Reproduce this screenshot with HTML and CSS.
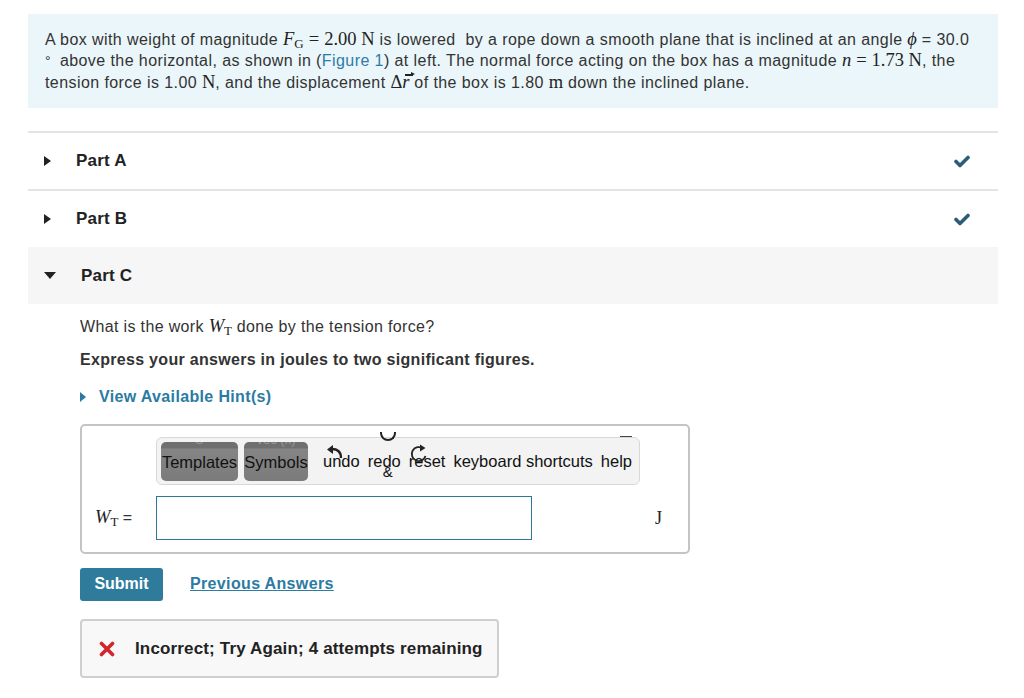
FILE: index.html
```html
<!DOCTYPE html>
<html lang="en">
<head>
    <meta charset="UTF-8">
    <title>Work done by the tension force</title>
    <link rel="stylesheet" href="styles.css">
</head>
<body>
    <div class="page">
        <!-- Problem statement -->
        <div class="intro">
            A box with weight of magnitude <span class="m"><i>F</i><sub>G</sub><span class="eq">=</span>2.00 N</span> is lowered&nbsp; by a rope down a smooth plane that is inclined at an angle <span class="m"><i>ϕ</i></span> = 30.0<br>
            <span class="deg">°</span> above the horizontal, as shown in (<a class="figlink">Figure 1</a>) at left. The normal force acting on the box has a magnitude <span class="m"><i>n</i><span class="eq">=</span>1.73 N</span>, the<br>
            tension force is 1.00 <span class="m">N</span>, and the displacement <span class="m">Δ<i class="vec">r</i></span> of the box is 1.80 <span class="m">m</span> down the inclined plane.
        </div>

        <!-- Parts -->
        <div class="parts">
            <div class="part">
                <span class="tri-right"></span>
                <span class="part-title">Part A</span>
                <svg class="check" width="16" height="13" viewBox="0 0 16 13"><path d="M2 6.5 L6 10.5 L14 2.5" fill="none" stroke="#2c5d78" stroke-width="3.6" stroke-linecap="round" stroke-linejoin="round"/></svg>
            </div>
            <div class="part">
                <span class="tri-right"></span>
                <span class="part-title">Part B</span>
                <svg class="check" width="16" height="13" viewBox="0 0 16 13"><path d="M2 6.5 L6 10.5 L14 2.5" fill="none" stroke="#2c5d78" stroke-width="3.6" stroke-linecap="round" stroke-linejoin="round"/></svg>
            </div>
            <div class="part part-open">
                <span class="tri-down"></span>
                <span class="part-title">Part C</span>
            </div>

            <div class="part-body">
                <p class="question">What is the work <span class="m"><i>W</i><sub>T</sub></span> done by the tension force?</p>
                <p class="instr">Express your answers in joules to two significant figures.</p>
                <p class="hint"><span class="tri-hint"></span>View Available Hint(s)</p>

                <div class="answer-box">
                    <div class="toolbar">
                        <span class="tb-btn tb-templates"><span class="ghost">U</span>Templates</span>
                        <span class="tb-btn tb-symbols"><span class="ghost">vec (x)</span>Symbols</span>
                        <span class="tb-word">
                            <svg class="ico ico-undo" width="18" height="14" viewBox="0 0 18 14"><path d="M15 13 C15 6 11 4 6 4" fill="none" stroke="#222" stroke-width="2.4"/><path d="M7 0 L1 4.5 L7 9 Z" fill="#222"/></svg>
                            undo
                        </span>
                        <span class="tb-word">
                            <span class="ico ico-arc"></span>
                            <span class="ico ico-amp">&amp;</span>
                            redo
                        </span>
                        <span class="tb-word">
                            <svg class="ico ico-reset" width="20" height="20" viewBox="0 0 20 20"><path d="M14 4.5 A7 7 0 1 0 16.5 12" fill="none" stroke="#222" stroke-width="1.8"/><path d="M11 0.5 L16.5 4 L11 7.5 Z" fill="#222"/></svg>
                            reset
                        </span>
                        <span class="tb-word">keyboard shortcuts</span>
                        <span class="tb-word">
                            <span class="ico ico-bar"></span>
                            help
                        </span>
                    </div>

                    <div class="answer-row">
                        <span class="label"><span class="m"><i>W</i><sub>T</sub></span> =</span>
                        <span class="input"></span>
                        <span class="unit">J</span>
                    </div>
                </div>

                <div class="actions">
                    <span class="submit">Submit</span>
                    <a class="prev">Previous Answers</a>
                </div>

                <div class="feedback">
                    <svg class="cross" width="16" height="16" viewBox="0 0 16 16"><path d="M2.5 2.5 L13.5 13.5 M13.5 2.5 L2.5 13.5" stroke="#d1262b" stroke-width="3.6" stroke-linecap="round"/></svg>
                    <span>Incorrect; Try Again; 4 attempts remaining</span>
                </div>
            </div>
        </div>
    </div>
</body>
</html>
```

FILE: styles.css
```css
body {
    margin: 0;
    font-family: "Liberation Sans", Arial, sans-serif;
    color: #333;
    background: #fff;
}

.page {
    width: 970px;
    padding: 14px 0 0 28px;
}

/* Problem statement */
.intro {
    background: #eaf6f9;
    padding: 15px 17px 16px;
    font-size: 16px;
    letter-spacing: 0.42px;
    line-height: 21px;
    height: 63px;
    white-space: nowrap;
}

.m {
    font-family: "Liberation Serif", "DejaVu Serif", serif;
    font-size: 18.5px;
    letter-spacing: 0;
    line-height: 0;
    color: #222;
}

.m sub {
    font-size: 13px;
    font-style: normal;
    line-height: 0;
    vertical-align: -3px;
}

.eq {
    margin: 0 5px;
}

/* vector arrow over r */
.vec {
    display: inline-block;
    position: relative;
    line-height: 18px;
}

.vec::before {
    content: "";
    position: absolute;
    top: 1px;
    left: 3px;
    width: 8px;
    height: 1.5px;
    background: #222;
}

.vec::after {
    content: "";
    position: absolute;
    top: -1px;
    left: 9px;
    border-top: 2.5px solid transparent;
    border-bottom: 2.5px solid transparent;
    border-left: 4px solid #222;
}

.deg {
    font-size: 14px;
    margin-right: 4px;
}

.figlink {
    color: #2d7ca6;
}

/* Part rows */
.parts {
    margin-top: 23px;
}

.part {
    display: flex;
    align-items: center;
    height: 56px;
    border-top: 2px solid #e4e4e4;
    padding-left: 16px;
    padding-right: 28px;
}

.part-open {
    background: #f6f6f6;
    border-top: none;
    height: 57px;
}

.part-title {
    font-size: 17px;
    letter-spacing: 0.2px;
    font-weight: bold;
    color: #222;
}

.tri-right {
    width: 0;
    height: 0;
    border-top: 5px solid transparent;
    border-bottom: 5px solid transparent;
    border-left: 7px solid #222;
    margin-right: 25px;
}

.tri-down {
    width: 0;
    height: 0;
    border-left: 6px solid transparent;
    border-right: 6px solid transparent;
    border-top: 7px solid #222;
    margin-right: 25px;
}

.check {
    margin-left: auto;
}

/* Part C content */
.part-body {
    padding-left: 52px;
}

.question {
    margin: 12px 0 0;
    font-size: 16px;
    letter-spacing: 0.35px;
    line-height: 21px;
}

.instr {
    margin: 12px 0 0;
    font-size: 16px;
    letter-spacing: 0.3px;
    line-height: 21px;
    font-weight: bold;
}

.hint {
    margin: 16px 0 0;
    font-size: 16px;
    letter-spacing: 0.35px;
    line-height: 21px;
    font-weight: bold;
    color: #2b7ba2;
    display: flex;
    align-items: center;
}

.tri-hint {
    width: 0;
    height: 0;
    border-top: 5px solid transparent;
    border-bottom: 5px solid transparent;
    border-left: 6px solid #2b7ba2;
    margin-right: 13px;
}

/* Answer box */
.answer-box {
    margin-top: 17px;
    width: 606px;
    border: 2px solid #c4c4c4;
    border-radius: 5px;
    padding: 11px 0 12px;
}

.toolbar {
    margin-left: 74px;
    width: 478px;
    height: 46px;
    background: #f3f3f3;
    border: 1px solid #d8d8d8;
    border-radius: 6px;
    display: flex;
    align-items: center;
    padding-left: 4px;
    font-size: 16.5px;
    color: #111;
    white-space: nowrap;
}

.toolbar > span {
    flex-shrink: 0;
}

.tb-btn {
    position: relative;
    overflow: hidden;
    height: 39px;
    line-height: 40px;
    border-radius: 5px;
    background: linear-gradient(#6f6f6f 0, #6f6f6f 6px, #858585 7px, #7b7b7b 100%);
    color: #111;
    text-align: center;
    margin-right: 6px;
}

.tb-templates {
    width: 77px;
}

.tb-symbols {
    width: 64px;
    margin-right: 15px;
}

.ghost {
    position: absolute;
    top: -12px;
    left: 0;
    right: 0;
    font-size: 13px;
    line-height: 20px;
    color: #9a9a9a;
}

.tb-word {
    position: relative;
    margin-right: 8px;
}

.ico {
    position: absolute;
}

.ico-undo {
    left: 3px;
    top: -7px;
}

.ico-arc {
    left: 12px;
    top: -20px;
    width: 12px;
    height: 7px;
    border: 2px solid #222;
    border-top: none;
    border-radius: 0 0 8px 8px;
}

.ico-amp {
    left: 15px;
    top: 11px;
    font-size: 15px;
}

.ico-reset {
    left: 0;
    top: -8px;
}

.ico-bar {
    right: 0;
    top: -16px;
    width: 12px;
    height: 1px;
    background: #444;
}

.answer-row {
    display: flex;
    align-items: center;
    margin-top: 11px;
}

.label {
    width: 61px;
    padding-left: 13px;
    font-size: 16px;
}

.input {
    width: 374px;
    height: 42px;
    border: 1.5px solid #2c7896;
    background: #fff;
}

.unit {
    margin-left: auto;
    margin-right: 26px;
    font-family: "Liberation Serif", "DejaVu Serif", serif;
    font-size: 18px;
    color: #222;
}

/* Submit row */
.actions {
    margin-top: 14px;
    display: flex;
    align-items: center;
}

.submit {
    width: 83px;
    height: 33px;
    line-height: 32px;
    text-align: center;
    background: #2f7b9c;
    color: #fff;
    font-size: 16px;
    font-weight: bold;
    border-radius: 3px;
}

.prev {
    margin-left: 27px;
    margin-bottom: 2px;
    font-size: 16px;
    letter-spacing: 0.35px;
    font-weight: bold;
    color: #2b7ba2;
    text-decoration: underline;
}

/* Feedback */
.feedback {
    margin-top: 18px;
    box-sizing: border-box;
    width: 419px;
    height: 59px;
    border: 2px solid #cfcfcf;
    border-radius: 4px;
    background: #f8f8f8;
    display: flex;
    align-items: center;
    padding-left: 17px;
    font-size: 17px;
    letter-spacing: 0.15px;
    font-weight: bold;
    color: #222;
}

.cross {
    margin-right: 20px;
}
```
